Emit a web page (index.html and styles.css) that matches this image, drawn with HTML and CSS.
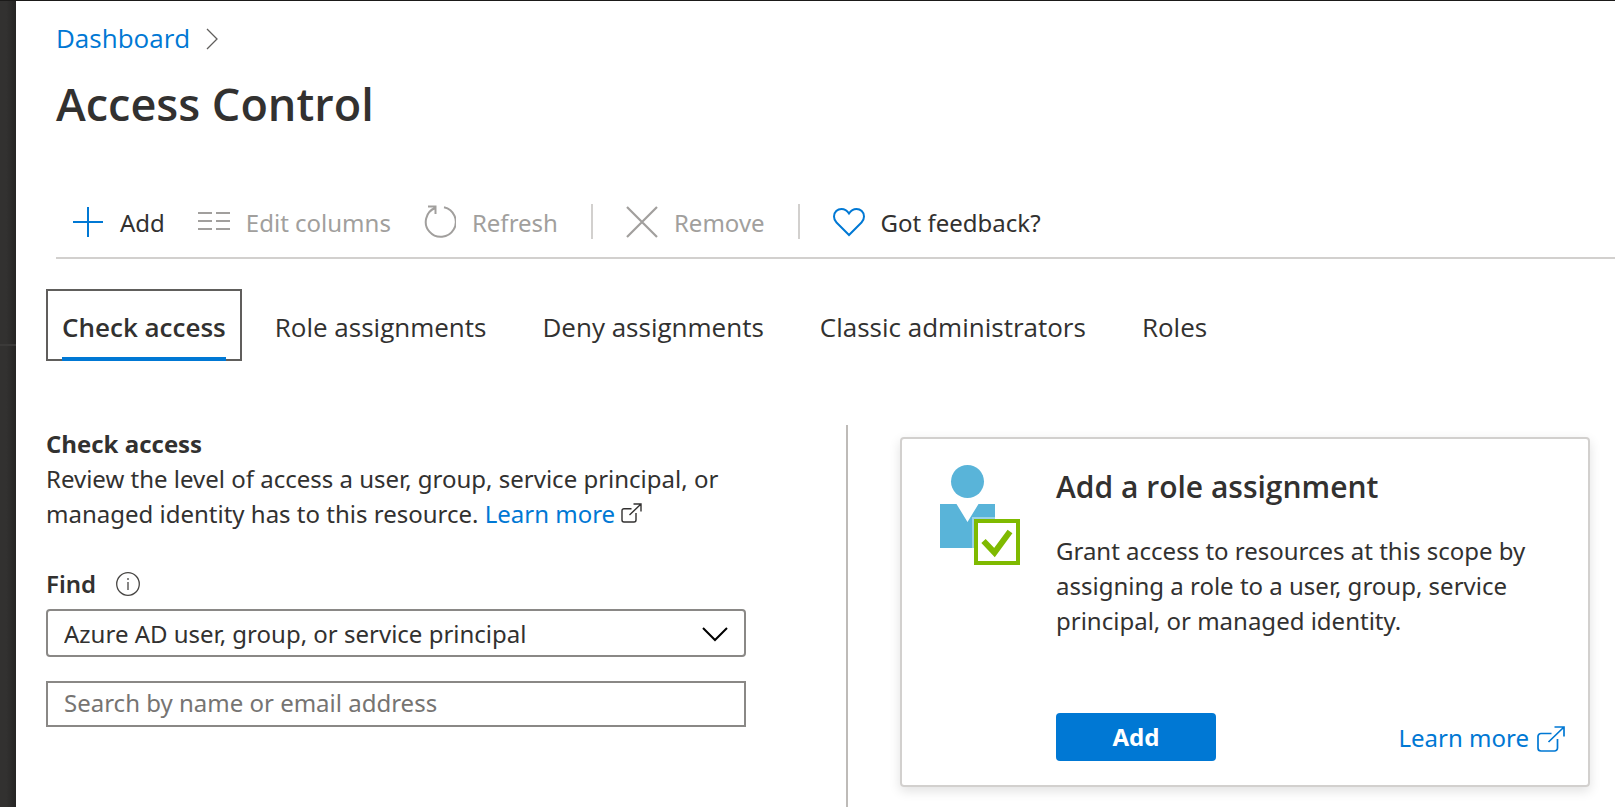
FILE: index.html
```html
<!DOCTYPE html>
<html lang="en">
<head>
<meta charset="utf-8">
<title>Access Control</title>
<link rel="stylesheet" href="styles.css">
</head>
<body>
<div class="app">
  <aside class="rail"></aside>
  <main class="blade">
    <header class="head">
      <nav class="crumbs" aria-label="Breadcrumb">
        <a class="link" href="#">Dashboard</a>
        <svg class="crumb-arrow" width="12" height="22" viewBox="0 0 12 22" fill="none" stroke="#605e5c" stroke-width="1.3"><path d="M1 1l10 10L1 21"/></svg>
      </nav>
      <h1 class="title">Access Control</h1>
    </header>

    <div class="toolbar">
      <button class="tool" type="button">
        <svg width="32" height="34" viewBox="0 0 32 34" fill="none" stroke="#0078d4" stroke-width="2"><path d="M1 17h30M16 2v30"/></svg>
        <span class="tool-text">Add</span>
      </button>
      <button class="tool" type="button" disabled>
        <svg width="32" height="34" viewBox="0 0 32 34" fill="none" stroke="#a19f9d" stroke-width="2"><path d="M0 8h14M18 8h14M0 16h14M18 16h14M0 24h14M18 24h14"/></svg>
        <span class="tool-text">Edit columns</span>
      </button>
      <button class="tool" type="button" disabled>
        <svg width="32" height="34" viewBox="0 0 32 34" fill="none" stroke="#a19f9d" stroke-width="2"><path d="M20 2.200A15 15 0 1 1 11 3M4 1.500h7.500V9"/></svg>
        <span class="tool-text">Refresh</span>
      </button>
      <span class="bar"></span>
      <button class="tool" type="button" disabled>
        <svg width="32" height="34" viewBox="0 0 32 34" fill="none" stroke="#a19f9d" stroke-width="2.2"><path d="M1 2l30 30M31 2L1 32"/></svg>
        <span class="tool-text">Remove</span>
      </button>
      <span class="bar"></span>
      <button class="tool" type="button">
        <svg width="32" height="34" viewBox="0 0 32 34" fill="none" stroke="#0078d4" stroke-width="2"><path d="M16 30L3.500 17.500C1.500 15.500 1 13.500 1 11.500C1 7 4.500 4 8.500 4C11.500 4 14 5.500 16 8.500C18 5.500 20.500 4 23.500 4C27.500 4 31 7 31 11.500C31 13.500 30.500 15.500 28.500 17.500z"/></svg>
        <span class="tool-text">Got feedback?</span>
      </button>
    </div>

    <nav class="tabs" role="tablist">
      <button class="tab tab-active" type="button" role="tab" aria-selected="true"><span class="tab-text">Check access</span></button>
      <button class="tab" type="button" role="tab">Role assignments</button>
      <button class="tab" type="button" role="tab">Deny assignments</button>
      <button class="tab" type="button" role="tab">Classic administrators</button>
      <button class="tab" type="button" role="tab">Roles</button>
    </nav>

    <div class="content">
      <section class="check">
        <h2 class="check-title">Check access</h2>
        <p class="text">Review the level of access a user, group, service principal, or managed identity has to this resource. <a class="link" href="#">Learn more</a> <svg width="21" height="20" viewBox="0 0 21 20" fill="none" stroke="#323130" stroke-width="1.400"><path d="M10.500 5.700H3a2 2 0 0 0-2 2V17a2 2 0 0 0 2 2h10a2 2 0 0 0 2-2V10M8.500 12L20 1M12.500 1H20v7.500"/></svg></p>
        <div class="find">
          <label class="label" for="kind">Find</label>
          <svg width="24" height="24" viewBox="0 0 24 24" fill="none" stroke="#484644" stroke-width="1.300"><circle cx="12" cy="12" r="11.300"/><path d="M12 10v8M12 6v2"/></svg>
        </div>
        <div class="select-wrap">
          <select class="field select" id="kind"><option>Azure AD user, group, or service principal</option></select>
          <svg class="caret" width="26" height="15" viewBox="0 0 26 15" fill="none" stroke="#000" stroke-width="2"><path d="M1 1l12 12L25 1"/></svg>
        </div>
        <input class="field search" type="text" placeholder="Search by name or email address" aria-label="Search by name or email address">
      </section>

      <section class="side">
        <article class="card">
          <svg class="card-icon" width="80" height="100" viewBox="0 0 80 100"><circle cx="27.500" cy="16.500" r="16.500" fill="#59b4d9"/><path d="M0 39h16.500L27.500 57 38.500 39H55v44H0z" fill="#59b4d9"/><path d="M32 52h23v2H34v29h-2z" fill="#9bd2e8"/><path d="M36 56h42v42H36z" fill="#fff" stroke="#7fba00" stroke-width="4"/><path d="M43.500 76l11 11.500 15.500-21" fill="none" stroke="#7fba00" stroke-width="6"/></svg>
          <div class="card-body">
            <h2 class="card-title">Add a role assignment</h2>
            <p class="text card-text">Grant access to resources at this scope by assigning a role to a user, group, service principal, or managed identity.</p>
            <div class="card-actions">
              <button class="primary" type="button">Add</button>
              <a class="link more" href="#">Learn more
                <svg class="more-icon" width="28" height="26" viewBox="0 0 28 26" fill="none" stroke="#0078d4" stroke-width="1.700"><path d="M14.500 7.500H4a3 3 0 0 0-3 3V22a3 3 0 0 0 3 3h13.500a3 3 0 0 0 3-3V13M11.500 16L27 1M17.500 1H27v9.500"/></svg>
              </a>
            </div>
          </div>
        </article>
      </section>
    </div>
  </main>
</div>
</body>
</html>
```

FILE: styles.css
```css
* {
  box-sizing: border-box;
}

body {
  margin: 0;
  background: #fff;
  color: #323130;
  font-family: "Noto Sans", "Open Sans", sans-serif;
  font-size: 24px;
  line-height: 35px;
}

h1, h2, p {
  margin: 0;
}

button, input, select {
  font: inherit;
  color: inherit;
}

.app {
  display: flex;
  min-height: 100vh;
  border-top: 1px solid #1b1a19;
}

.rail {
  flex: 0 0 16px;
  background: linear-gradient(#3b3a39, #3b3a39) 0 343px / 100% 2px no-repeat,
    linear-gradient(to right, #323130 40%, #252423);
}

.blade {
  flex: 1;
  min-width: 0;
  display: flex;
  flex-direction: column;
}

.link {
  color: #0078d4;
  text-decoration: none;
}

.head {
  padding: 20px 40px 0;
  font-family: "Open Sans", "Noto Sans", sans-serif;
}

.crumbs {
  display: flex;
  align-items: center;
  gap: 16px;
  font-size: 26px;
}

.title {
  margin-top: 16px;
  font-size: 45px;
  font-weight: 600;
  line-height: 64px;
}

.toolbar {
  display: flex;
  align-items: center;
  gap: 33px;
  margin: 57px 0 0 40px;
  padding: 10px 0 17px 16px;
  border-bottom: 2px solid #d2d0ce;
}

.tool {
  display: flex;
  align-items: center;
  gap: 16px;
  padding: 0;
  border: 0;
  background: none;
  white-space: nowrap;
}

.tool-text {
  padding-top: 2px;
}

.tool:disabled {
  color: #a19f9d;
}

.bar {
  width: 2px;
  height: 35px;
  background: #d2d0ce;
}

.tabs {
  display: flex;
  gap: 22px;
  margin: 30px 0 0 30px;
  font-family: "Open Sans", "Noto Sans", sans-serif;
}

.tab {
  height: 72px;
  padding: 4px 17px 0;
  border: 0;
  background: none;
  font-size: 26px;
  white-space: nowrap;
}

.tab-active {
  display: flex;
  border: 2px solid #605e5c;
  padding: 0 14px;
  margin-right: -6px;
  font-weight: 600;
}

.tab-text {
  display: flex;
  align-items: center;
  height: 72px;
  padding-top: 8px;
  margin: -2px 0;
  border-bottom: 4px solid #0078d4;
}

.content {
  flex: 1;
  display: grid;
  grid-template-columns: 802fr 767fr;
  margin: 64px 0 0 30px;
}

.check {
  padding: 1px 100px 0 0;
  border-right: 2px solid #bebbb8;
}

.check-title {
  font-family: "Open Sans", "Noto Sans", sans-serif;
  font-size: 24px;
  font-weight: 700;
  line-height: 35px;
}

.find {
  display: flex;
  align-items: center;
  gap: 20px;
  margin-top: 35px;
}

.label {
  font-weight: 600;
}

.select-wrap {
  position: relative;
  margin: 8px 0 24px;
}

.field {
  display: block;
  width: 100%;
  height: 48px;
  padding: 0 16px;
  border: 2px solid #8a8886;
  border-radius: 4px;
  background: #fff;
}

.select {
  appearance: none;
}

.search {
  height: 46px;
  padding-bottom: 4px;
  border-radius: 0;
}

.search::placeholder {
  color: #767472;
  opacity: 1;
}

.caret {
  position: absolute;
  right: 18px;
  top: 18px;
  pointer-events: none;
}

.side {
  padding: 12px 25px 20px 52px;
}

.card {
  display: flex;
  gap: 36px;
  height: 350px;
  padding: 26px 23px 24px 38px;
  border: 2px solid #d2d0ce;
  border-radius: 4px;
  box-shadow: 0 4px 12px rgba(0, 0, 0, 0.12);
}

.card-icon {
  flex: none;
}

.card-body {
  flex: 1;
  min-width: 0;
  display: flex;
  flex-direction: column;
}

.card-title {
  font-family: "Open Sans", "Noto Sans", sans-serif;
  font-size: 30px;
  font-weight: 600;
  line-height: 44px;
}

.card-text {
  margin-top: 24px;
}

.card-actions {
  display: flex;
  align-items: center;
  justify-content: space-between;
  margin-top: auto;
}

.primary {
  width: 160px;
  height: 48px;
  padding: 0 0 2px;
  border: 0;
  border-radius: 4px;
  background: #0078d4;
  color: #fff;
  font-weight: 700;
}

.more {
  display: flex;
  align-items: center;
  gap: 8px;
}

.more-icon {
  margin-top: 4px;
}
```
